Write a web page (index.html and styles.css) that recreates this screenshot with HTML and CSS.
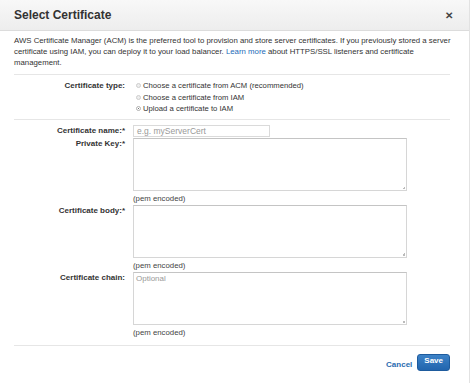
FILE: index.html
```html
<!DOCTYPE html>
<html>
<head>
<meta charset="utf-8">
<link rel="stylesheet" href="styles.css">
</head>
<body>
<div class="modal">
  <div class="header">
    <h1 class="title">Select Certificate</h1>
    <span class="close">✕</span>
  </div>
  <div class="body">
    <p class="desc">AWS Certificate Manager (ACM) is the preferred tool to provision and store server certificates. If you previously stored a server certificate using IAM, you can deploy it to your load balancer. <a class="link">Learn more</a> about HTTPS/SSL listeners and certificate management.</p>
    <div class="section type-section">
      <div class="label">Certificate type:</div>
      <div class="radios">
        <label class="radio"><span class="dot"></span>Choose a certificate from ACM (recommended)</label>
        <label class="radio"><span class="dot"></span>Choose a certificate from IAM</label>
        <label class="radio"><span class="dot on"></span>Upload a certificate to IAM</label>
      </div>
    </div>
    <div class="section form">
      <div class="label">Certificate name:*</div>
      <div class="input">e.g. myServerCert</div>
      <div class="label">Private Key:*</div>
      <div class="field"><div class="ta"><span class="grip"></span></div><div class="hint">(pem encoded)</div></div>
      <div class="label">Certificate body:*</div>
      <div class="field"><div class="ta"><span class="grip"></span></div><div class="hint">(pem encoded)</div></div>
      <div class="label">Certificate chain:</div>
      <div class="field"><div class="ta"><span class="ph">Optional</span><span class="grip"></span></div><div class="hint">(pem encoded)</div></div>
    </div>
    <div class="footer">
      <span class="cancel">Cancel</span>
      <span class="save">Save</span>
    </div>
  </div>
</div>
</body>
</html>
```
FILE: styles.css
```css
html, body { margin: 0; padding: 0; background: #fff; }
body { font-family: "Liberation Sans", Arial, sans-serif; color: #333; width: 474px; height: 383px; overflow: hidden; }
.modal { width: 470px; height: 383px; border-right: 1px solid #e2e2e2; box-sizing: border-box; position: relative; }
.header { height: 31px; box-sizing: border-box; display: flex; align-items: center; justify-content: space-between; padding: 0 16px 0 14px; background: linear-gradient(#f8f8f8, #ededed); border-bottom: 1px solid #dcdcdc; }
.title { margin: 0; font-size: 12px; font-weight: bold; color: #333; }
.close { font-size: 10px; color: #444; font-weight: bold; }
.body { padding: 4px 19px 0 14px; }
.desc { margin: 0 -8px 0 0; font-size: 7.8px; line-height: 11px; color: #333; }
.link { color: #1a6bb8; }
.section { border-top: 1px solid #e6e6e6; }
.type-section { margin-top: 6px; padding: 5px 0 4px; display: grid; grid-template-columns: 111px 1fr; column-gap: 11px; }
.label { font-size: 8px; font-weight: bold; text-align: right; color: #333; line-height: 11px; }
.radios { display: flex; flex-direction: column; }
.radio { font-size: 7.7px; line-height: 11.5px; display: flex; align-items: center; color: #333; }
.dot { width: 5px; height: 5px; border: 1px solid #cdcdcd; border-radius: 50%; background: #eeeeee; margin-right: 2px; box-sizing: border-box; display: inline-block; position: relative; }
.dot.on { background: #fff; border-color: #b0b0b0; }
.dot.on::after { content: ""; position: absolute; left: 1px; top: 1px; width: 1px; height: 1px; border-radius: 50%; background: #444; }
.form { display: grid; grid-template-columns: 111px 274px; column-gap: 8px; row-gap: 1px; padding-top: 5px; }
.input { width: 137px; height: 12px; box-sizing: border-box; border: 1px solid #dadada; font-size: 8.5px; color: #999; padding: 0 0 0 3px; line-height: 10px; }
.field { display: flex; flex-direction: column; }
.ta { height: 53px; box-sizing: border-box; border: 1px solid #d6d6d6; border-top-color: #c4c4c4; position: relative; }
.ph { font-size: 8px; color: #999; position: absolute; left: 2px; top: 1px; }
.grip { position: absolute; right: 1px; bottom: 1px; width: 3px; height: 3px; background: linear-gradient(135deg, transparent 50%, #bbb 50%); }
.hint { font-size: 7.8px; color: #444; height: 10px; line-height: 10px; margin-top: 3px; }
.footer { border-top: 1px solid #e6e6e6; margin-top: 7px; display: flex; justify-content: flex-end; align-items: center; gap: 5px; padding-top: 8px; }
.cancel { font-size: 8px; font-weight: bold; color: #2a6cb0; margin-top: 5px; }
.save { font-size: 8px; font-weight: bold; color: #fff; background: linear-gradient(#3c82c7, #2265ae); border: 1px solid #1e5b9d; border-radius: 3px; padding: 2px 6px 5px; line-height: 8px; }
```
